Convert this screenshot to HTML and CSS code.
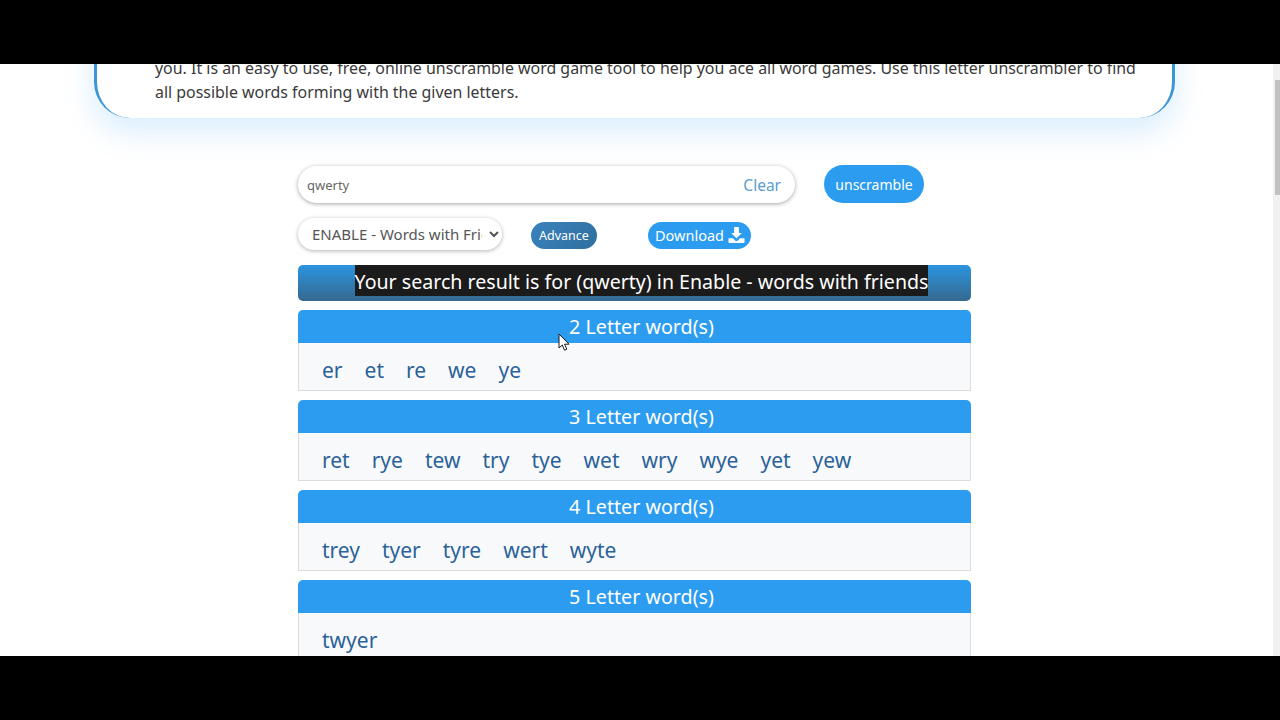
FILE: index.html
```html
<!DOCTYPE html>
<html lang="en">
<head>
    <meta charset="UTF-8">
    <meta name="viewport" content="width=device-width, initial-scale=1.0">
    <title>Word Unscrambler</title>
    <link rel="stylesheet" href="styles.css">
</head>
<body>
    <div class="video-bar"></div>

    <div class="viewport">
        <div class="page">
            <div class="intro">
                <p>you. It is an easy to use, free, online unscramble word game tool to help you ace all word games. Use this letter unscrambler to find all possible words forming with the given letters.</p>
            </div>

            <div class="tool">
                <div class="search-row">
                    <div class="search-box">
                        <span class="search-value">qwerty</span>
                        <span class="clear">Clear</span>
                    </div>
                    <button class="btn-unscramble">unscramble</button>
                </div>

                <div class="options-row">
                    <select class="dict-select">
                        <option>ENABLE - Words with Friends</option>
                    </select>
                    <button class="btn-advance">Advance</button>
                    <button class="btn-download">Download
                        <svg class="download-icon" viewBox="0 0 16 16" width="17" height="16">
                            <path fill="#fff" d="M6.200 0h3.600c.3 0 .6.300.6.600V6h3l-5.400 5.300L2.600 6h3V.6c0-.3.300-.6.600-.6z"/>
                            <path fill="#fff" d="M0 11.300h4.400l2.500 2.400c.6.600 1.600.6 2.200 0l2.500-2.400H16v4c0 .4-.3.700-.7.700H.7c-.4 0-.7-.3-.7-.7z"/>
                        </svg>
                    </button>
                </div>

                <div class="result-title"><span>Your search result is for (qwerty) in Enable - words with friends</span></div>

                <div class="word-group">
                    <div class="word-head">2 Letter word(s)</div>
                    <div class="word-list">
                        <a>er</a><a>et</a><a>re</a><a>we</a><a>ye</a>
                    </div>
                </div>
                <div class="word-group">
                    <div class="word-head">3 Letter word(s)</div>
                    <div class="word-list">
                        <a>ret</a><a>rye</a><a>tew</a><a>try</a><a>tye</a><a>wet</a><a>wry</a><a>wye</a><a>yet</a><a>yew</a>
                    </div>
                </div>
                <div class="word-group">
                    <div class="word-head">4 Letter word(s)</div>
                    <div class="word-list">
                        <a>trey</a><a>tyer</a><a>tyre</a><a>wert</a><a>wyte</a>
                    </div>
                </div>
                <div class="word-group">
                    <div class="word-head">5 Letter word(s)</div>
                    <div class="word-list">
                        <a>twyer</a>
                    </div>
                </div>
            </div>
        </div>

        <div class="scrollbar"><div class="scroll-thumb"></div></div>

        <!-- mouse pointer caught in the recording -->
        <svg class="cursor" viewBox="0 0 12 19" width="12" height="19">
            <path fill="#fff" stroke="#1a1a1a" stroke-width="1" d="M1 1v14l3.300-3 2.200 5.200 2.300-1-2.200-5H11z"/>
        </svg>
    </div>

    <div class="video-bar"></div>
</body>
</html>
```

FILE: styles.css
```css
/* General Styles */
html, body {
    height: 100%;
}
body {
    margin: 0;
    background: #000;
    font-family: "Noto Sans", "Open Sans", sans-serif;
    color: #333;
    display: flex;
    flex-direction: column;
    overflow: hidden;
}
.video-bar {
    height: 64px;
    background: #000;
    flex: none;
}
.viewport {
    position: relative;
    height: 592px;
    flex: none;
    display: flex;
    overflow: hidden;
    background: #fff;
}
.page {
    flex: 1;
    min-width: 0;
    overflow: hidden;
}

/* Intro card */
.intro {
    box-sizing: border-box;
    width: 1081px;
    height: 120px;
    margin: -66px 0 0 94px;
    padding: 58px 36px 0 58px;
    background: #fff;
    border: 3px solid #3a96d6;
    border-top: none;
    border-bottom: none;
    border-radius: 0 0 36px 36px;
    box-shadow: 0 14px 30px rgba(43, 156, 240, 0.18);
}
.intro p {
    margin: 0;
    font-size: 15.930px;
    line-height: 24px;
    color: #3a3a3a;
}

/* Search */
.tool {
    width: 673px;
    margin: 47px 0 0 298px;
}
.search-row {
    display: flex;
    align-items: center;
    gap: 29px;
}
.search-box {
    box-sizing: border-box;
    width: 497px;
    height: 37px;
    display: flex;
    align-items: center;
    justify-content: space-between;
    padding: 2px 14px 0 9px;
    border-radius: 19px;
    background: #fff;
    box-shadow: 0 1px 4px rgba(0, 0, 0, 0.35);
}
.search-value {
    font-size: 13px;
    color: #666;
}
.clear {
    font-size: 15.500px;
    color: #5b9bd0;
}
.btn-unscramble {
    width: 100px;
    height: 38px;
    padding: 0;
    border: none;
    border-radius: 19px;
    background: #2b9cf0;
    color: #fff;
    font-family: inherit;
    font-size: 14px;
}

/* Options */
.options-row {
    display: flex;
    align-items: center;
    margin-top: 15px;
}
.dict-select {
    box-sizing: border-box;
    width: 204px;
    height: 32px;
    padding: 0 4px 0 10px;
    border: none;
    border-radius: 16px;
    background: #fff;
    box-shadow: 0 1px 4px rgba(0, 0, 0, 0.3);
    color: #555;
    font-family: inherit;
    font-size: 15px;
}
.btn-advance {
    width: 66px;
    height: 27px;
    margin: 2px 0 0 29px;
    padding: 0;
    border: none;
    border-radius: 14px;
    background: linear-gradient(135deg, #3a82bd, #2f6f9f);
    color: #fff;
    font-family: inherit;
    font-size: 12.500px;
}
.btn-download {
    width: 103px;
    height: 27px;
    margin: 2px 0 0 51px;
    padding: 0 0 0 1px;
    border: none;
    border-radius: 14px;
    background: #2b9cf0;
    color: #fff;
    font-family: inherit;
    font-size: 14.500px;
    display: flex;
    align-items: center;
    justify-content: center;
    gap: 4px;
}

/* Result title */
.result-title {
    height: 36px;
    margin-top: 15px;
    padding-left: 14px;
    border-radius: 5px;
    background: linear-gradient(#2b94e0, #35698f);
    text-align: center;
}
.result-title span {
    display: inline-block;
    height: 31px;
    line-height: 33px;
    background: #1b1b1b;
    color: #fff;
    font-size: 19.600px;
    white-space: nowrap;
}

/* Word groups */
.word-group {
    margin-top: 9px;
}
.word-head {
    box-sizing: border-box;
    height: 33px;
    line-height: 33px;
    padding-left: 14px;
    border-radius: 5px 5px 0 0;
    background: #2b9cf0;
    color: #fff;
    text-align: center;
    font-size: 19.700px;
}
.word-list {
    box-sizing: border-box;
    height: 48px;
    display: flex;
    align-items: center;
    gap: 22px;
    padding: 6px 23px 0;
    background: #f8f9fb;
    border: 1px solid #dcdcdc;
    border-top: none;
    font-size: 21px;
    color: #2a6299;
}

/* Scrollbar */
.scrollbar {
    width: 5px;
    flex: none;
    padding-top: 16px;
    padding-left: 2px;
    background: #f1f1f1;
}
.scroll-thumb {
    height: 115px;
    background: #c1c1c1;
}
.cursor {
    position: absolute;
    left: 558px;
    top: 269px;
}
```
